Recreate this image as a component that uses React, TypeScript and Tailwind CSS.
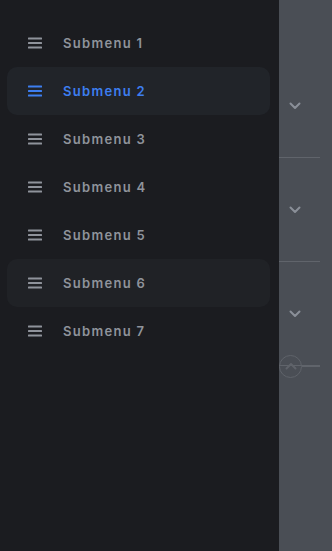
import React from "react"

const items = [1, 2, 3, 4, 5, 6, 7]

function MenuIcon({ className }: { className?: string }) {
  return (
    <svg viewBox="0 0 14 12" width="14" height="12" className={className} fill="currentColor">
      <rect x="0" y="0.5" width="14" height="2" rx="0.5" />
      <rect x="0" y="5" width="14" height="2" rx="0.5" />
      <rect x="0" y="9.5" width="14" height="2" rx="0.5" />
    </svg>
  )
}

function Chevron({ up = false }: { up?: boolean }) {
  return (
    <svg viewBox="0 0 12 8" width="12" height="8" fill="none" stroke="currentColor" strokeWidth="2" strokeLinecap="round" strokeLinejoin="round" className={up ? "rotate-180" : ""}>
      <path d="M1.5 1.5 L6 6 L10.5 1.5" />
    </svg>
  )
}

export default function App() {
  const active = 2
  const hovered = 6
  return (
    <div className="flex h-[551px] w-[332px] overflow-hidden bg-[#4a4e55]" style={{ fontFamily: "Inter, 'Noto Sans', sans-serif" }}>
      {/* Drawer */}
      <div className="w-[279px] shrink-0 bg-[#1b1c20] pt-[19px] pl-[7px] pr-[9px]">
        {items.map((n) => {
          const isActive = n === active
          const isHover = n === hovered
          return (
            <div
              key={n}
              className={`flex h-12 items-center gap-[21px] rounded-[10px] pl-[21px] ${
                isActive ? "bg-[#212429] text-[#3d7ef0]" : isHover ? "bg-[#202226] text-[#8f939b]" : "text-[#8f939b]"
              }`}
            >
              <MenuIcon />
              <span className="pt-[2px] text-[13px] font-semibold tracking-[0.1em]">Submenu {n}</span>
            </div>
          )
        })}
      </div>

      {/* Dimmed page behind */}
      <div className="flex flex-1 flex-col pr-3 text-[#8a8f98]">
        <div className="h-[54px]" />
        {[0, 1, 2].map((i) => (
          <div key={i} className="flex h-[104px] items-center border-b border-[#60646b] pl-[10px] pt-[1px]">
            <Chevron />
          </div>
        ))}
        <div className="relative -mt-[12px] flex h-6 items-center">
          <div className="flex h-[23px] w-[23px] items-center justify-center rounded-full border border-[#5f636a] text-[#5f636a]">
            <Chevron up />
          </div>
          <div className="h-px flex-1 bg-[#60646b]" />
        </div>
      </div>
    </div>
  )
}
